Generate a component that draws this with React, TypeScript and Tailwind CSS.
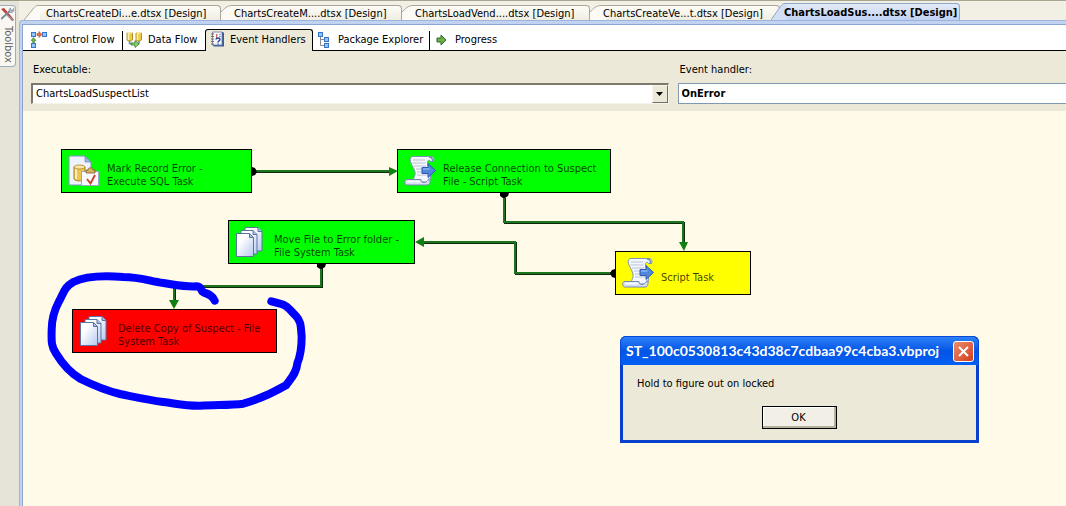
import { useState, type ReactNode } from 'react';
import clsx from 'clsx';

interface DocTab {
  title: string;
  width: string;
  first?: boolean;
}

const docTabs: DocTab[] = [
  { title: 'ChartsCreateDi...e.dtsx [Design]', width: 'w-[197px] pl-[22px]', first: true },
  { title: 'ChartsCreateM....dtsx [Design]', width: 'w-[181px] pl-[13px]' },
  { title: 'ChartsLoadVend....dtsx [Design]', width: 'w-[188px] pl-[13px]' },
  { title: 'ChartsCreateVe...t.dtsx [Design]', width: 'w-[190px] pl-[13px]' },
];

function ControlFlowIcon() {
  return (
    <svg width="17" height="17" viewBox="0 0 17 17" aria-hidden="true">
      <g fill="#8cc8fa" stroke="#3a74cc">
        <rect x="0.5" y="1.5" width="4" height="4" />
        <rect x="11.5" y="1.5" width="4" height="4" />
        <rect x="0.5" y="12.5" width="4" height="4" />
      </g>
      <path d="M6 2.500h2V0.500l3 3-3 3V4.500H6z" fill="#e86c3c" stroke="#b8401c" strokeWidth="0.600" />
      <path d="M1.500 11.500V9.500H0l2.500-3 2.500 3H3.500v2z" fill="#6cb84c" stroke="#3c7c28" strokeWidth="0.600" />
    </svg>
  );
}

function DataFlowIcon() {
  return (
    <svg width="17" height="17" viewBox="0 0 17 17" aria-hidden="true">
      <path d="M3.500 8v4.500H7M13 8v4.500H10" fill="none" stroke="#6a8fc8" strokeWidth="1.500" />
      <g fill="#f0c840" stroke="#a07c10" strokeWidth="0.800">
        <path d="M1 2v7c1 1.500 4.500 1.500 5.500 0V2z" />
        <path d="M10 2v7c1 1.500 4.500 1.500 5.500 0V2z" />
      </g>
      <path d="M2.500 3v6M11.500 3v6" stroke="#fff3b0" strokeWidth="1.500" />
      <ellipse cx="3.700" cy="2" rx="2.700" ry="1" fill="#fbe9a0" />
      <ellipse cx="12.700" cy="2" rx="2.700" ry="1" fill="#fbe9a0" />
      <path d="M5 12h4v-2.500l4 3.500-4 3.500V14H5z" fill="#8cd46c" stroke="#2b7a1c" strokeWidth="0.800" />
    </svg>
  );
}

function EventHandlersIcon() {
  return (
    <svg width="15" height="17" viewBox="0 0 15 17" aria-hidden="true">
      <path d="M3 1h10l1 1v13.500H4L2.500 14z" fill="#3a5c9c" />
      <path d="M2.500 1h9.500v13H2.500z" fill="#f4f6fb" stroke="#6a7a9c" strokeWidth="0.800" />
      <path d="M1 3h3M1 5.500h3M1 8h3M1 10.500h3M1 13h3" stroke="#7c6a50" />
      <path d="M6 4h1.500M6 6h1" stroke="#d23c28" strokeWidth="1.500" />
      <path d="M9 3.500h2M9 5.500h2" stroke="#8aa4d0" />
      <path d="M6 8.500c0-2 4-2 4 0 0 1.300-2 1.300-2 3M8 12.500v1" fill="none" stroke="#1c3c90" strokeWidth="1.300" />
    </svg>
  );
}

function PackageExplorerIcon() {
  return (
    <svg width="12" height="16" viewBox="0 0 12 16" aria-hidden="true">
      <path d="M2.500 5v8.500H7M2.500 7.500H7" fill="none" stroke="#8c8c8c" />
      <g fill="#8cc4f8" stroke="#3a74c4">
        <rect x="0.500" y="0.500" width="4" height="4" />
        <rect x="6.500" y="5.500" width="4" height="4" />
        <rect x="6.500" y="11.500" width="4" height="4" />
      </g>
    </svg>
  );
}

function ProgressIcon() {
  return (
    <svg width="11" height="12" viewBox="0 0 11 12" aria-hidden="true">
      <path d="M1 4h4V1l5 5-5 5V8H1z" fill="#6ab04c" stroke="#2f6a20" />
    </svg>
  );
}

function ToolboxIcon() {
  return (
    <svg width="14" height="16" viewBox="0 0 14 16" aria-hidden="true">
      <path d="M0 3l3-1 7 8 3 4-2 1L3 6z" fill="#c43a34" />
      <path d="M0 13l9-8" stroke="#7c8894" strokeWidth="2" />
      <path d="M12.500 2.500c1 2-0.500 4.500-3 4-1.800-0.500-2-3 0-4.500l0.500 2.500h1.500z" fill="#b8c4d0" stroke="#6c7c8c" strokeWidth="0.700" />
      <path d="M6 9l6 5" stroke="#8c98a4" strokeWidth="1.500" />
    </svg>
  );
}

function SqlTaskIcon() {
  return (
    <svg width="32" height="32" viewBox="0 0 32 32" aria-hidden="true">
      <path d="M1 1h16l6 6v23H1z" fill="#eef3fd" stroke="#8094c0" />
      <path d="M17 1v6h6z" fill="#9cb4e0" stroke="#6c84b8" strokeWidth="0.700" />
      <path d="M6 12v12c1 2.500 9 2.500 11 0V12z" fill="#ecc458" stroke="#a88020" />
      <path d="M8 13v11" stroke="#fff0b0" strokeWidth="2" />
      <ellipse cx="11.500" cy="12" rx="5.500" ry="2" fill="#fae8a8" stroke="#a88020" strokeWidth="0.800" />
      <rect x="13.500" y="16.500" width="17" height="14" fill="#fafbff" stroke="#98a8c8" />
      <path d="M18 18v-3h2c0-3 5-3 5 0h2v3z" fill="#d0b468" stroke="#806020" strokeWidth="0.800" />
      <path d="M19 24l3.500 4.500L27 20" fill="none" stroke="#cc4430" strokeWidth="2" />
    </svg>
  );
}

function ScriptTaskIcon() {
  return (
    <svg width="32" height="32" viewBox="0 0 32 32" aria-hidden="true">
      <path
        d="M8 1.500h19c3 0 3.500 3 2.500 5h-3c-0.500-2-3-1.500-3 0.500 0 5 3 9 3 14 0 3-0.500 5-1.500 6H10c-2-3 2-6 1-10C10 12 3 4.500 8 1.500z"
        fill="#f4f7fd"
        stroke="#8094b8"
      />
      <path d="M9 5h12M8.500 8h13M10 11h12M12 14h11M13 17h10M13 20h10" stroke="#b8c2d4" />
      <path d="M25 2c2.500 0 4 2 3.500 4.500" fill="none" stroke="#7088b0" strokeWidth="1.500" />
      <path d="M2 24.500h15c0 2 1 3 3 3s4-1.500 5-4c2 2 1 6.500-2 6.500H3c-2.500 0-3-4-1-5.500z" fill="#d8e2f4" stroke="#7488b0" />
      <path d="M3.500 26.500h12" stroke="#fff" strokeWidth="1.500" />
      <path d="M18 12.500h6v-4l7.500 7-7.500 7v-4h-6z" fill="#5288dc" stroke="#2c58b0" />
      <path d="M19 14h6.500" stroke="#a8c8f8" />
    </svg>
  );
}

function FileTaskIcon() {
  return (
    <svg width="32" height="32" viewBox="0 0 32 32" aria-hidden="true">
      <defs>
        <linearGradient id="sheet" x1="0" y1="0" x2="1" y2="1">
          <stop offset="0.300" stopColor="#ffffff" />
          <stop offset="1" stopColor="#b4c8f0" />
        </linearGradient>
      </defs>
      <g fill="url(#sheet)" stroke="#5c74a4">
        <path d="M10 1.500h13l4 4V25H10z" />
        <path d="M23 1.500v4h4" fill="#a8c0e8" />
        <path d="M6 4.500h12l4 4V28H6z" />
        <path d="M18 4.500v4h4" fill="#a8c0e8" />
        <path d="M1.500 7.500h13l4 4v19h-17z" />
        <path d="M14.500 7.500v4h4z" fill="#a8c0e8" />
      </g>
    </svg>
  );
}

function DocumentTab({ title, width, first }: DocTab) {
  return (
    <button type="button" className={clsx('relative flex h-[15px] shrink-0 items-center pt-0.5', width)}>
      <svg className="absolute top-0 left-0 h-[15px] w-4" viewBox="0 0 16 15" aria-hidden="true">
        {first ? (
          <>
            <path d="M0 15L9 4C11 1.500 12 0.500 14 0.500H16V15z" fill="#fbfaf4" />
            <path d="M0 15L9 4C11 1.500 12 0.500 14 0.500H16" fill="none" stroke="#a8a898" />
          </>
        ) : (
          <>
            <path d="M0 15V7C3 4 6 0.500 11 0.500H16V15z" fill="#fbfaf4" />
            <path d="M0 7C3 4 6 0.500 11 0.500H16" fill="none" stroke="#a8a898" />
          </>
        )}
      </svg>
      <span className="absolute top-0 right-0 left-4 h-[15px] rounded-tr border-t border-r border-[#a8a898] bg-gradient-to-b from-[#fdfcf8] to-[#f0ede0]" />
      <span className="relative">{title}</span>
    </button>
  );
}

interface ViewTabProps {
  icon: ReactNode;
  label: string;
  className: string;
}

function ViewTab({ icon, label, className }: ViewTabProps) {
  return (
    <button type="button" className={clsx('flex shrink-0 items-center border-black pb-0.5', className)}>
      {icon}
      <span>{label}</span>
    </button>
  );
}

interface TaskProps {
  icon: ReactNode;
  children: ReactNode;
  className: string;
}

function Task({ icon, children, className }: TaskProps) {
  return (
    <div className={clsx('absolute flex h-11 items-center gap-[7px] border border-black pl-1.5', className)}>
      {icon}
      <p className="pt-2 leading-[13px] text-black/75">{children}</p>
    </div>
  );
}

function Connector({ d }: { d: string }) {
  return (
    <g fill="none">
      <path d={d} stroke="#0c2c0c" strokeWidth="2" transform="translate(1 1)" />
      <path d={d} stroke="#1c741c" strokeWidth="2" />
    </g>
  );
}

function Connectors() {
  return (
    <svg className="absolute inset-0 h-full w-full" aria-hidden="true">
      <Connector d="M229 60H368" />
      <Connector d="M481 86V111H660V132" />
      <Connector d="M590 162H492V131H398" />
      <Connector d="M298 156V175H151V192" />
      <g fill="#108010">
        <path d="M375 60l-9-4v9z" />
        <path d="M661 140l-5-9h9z" />
        <path d="M392 131l9-5v10z" />
        <path d="M151 198l-5-9h10z" />
      </g>
      <g fill="#000">
        <path d="M229 56l3 1 2 4-2 3-3 1z" />
        <path d="M477 82h9l-1 3-3 2h-2l-3-2z" />
        <path d="M592 158l-3 1-2 3 2 4 3 1z" />
        <path d="M294 153h9l-1 3-3 2h-2l-3-2z" />
      </g>
    </svg>
  );
}

// Freehand pen mark round the failed task
function PenMark() {
  return (
    <svg className="pointer-events-none absolute top-[149px] left-[17px] h-[150px] w-[270px]" viewBox="0 0 810 450" aria-hidden="true">
      <path
        d="M524 122C518 106 504 102 490 97C480 90 486 80 470 79C430 81 400 73 370 69C330 64 300 51 250 51C200 47 140 46 100 66C72 82 72 98 56 126C38 160 35 185 35 210C34 245 34 260 48 280C65 308 90 338 122 357C160 376 200 392 240 402C285 411 325 420 370 426C410 431 440 438 480 437C530 434 570 436 610 431C650 420 700 398 738 376C752 356 770 340 772 310C784 280 785 260 785 230C782 200 784 185 768 168C750 150 740 134 720 131L694 124"
        fill="none"
        stroke="#0000ff"
        strokeWidth="24"
        strokeLinecap="round"
        strokeLinejoin="round"
      />
    </svg>
  );
}

function MessageBox({ onClose }: { onClose: () => void }) {
  return (
    <div
      role="dialog"
      aria-labelledby="msg-title"
      className="absolute top-[225px] left-[597px] w-[359px] rounded-t-md bg-[#0842cc] px-[3px] pb-[3px]"
    >
      <div className="-mx-[3px] flex h-[29px] items-center justify-between rounded-t-md border-x border-t border-[#0a48d8] bg-gradient-to-b from-[#2c80f8] via-[#0355e4] to-[#0460f4] pr-1 pl-[5px]">
        <h2 id="msg-title" className="font-['Lato',sans-serif] text-[14px] font-bold whitespace-nowrap text-white">
          ST_100c0530813c43d38c7cdbaa99c4cba3.vbproj
        </h2>
        <button
          type="button"
          aria-label="Close"
          onClick={onClose}
          className="flex h-[21px] w-[21px] shrink-0 items-center justify-center rounded-[3px] border border-white bg-gradient-to-br from-[#ec8a6c] to-[#d03c14]"
        >
          <svg width="13" height="13" viewBox="0 0 13 13" aria-hidden="true">
            <path d="M2 2l9 9M11 2l-9 9" stroke="#fff" strokeWidth="2" />
          </svg>
        </button>
      </div>
      <div className="flex flex-col bg-[#ece9d8] px-3.5 pt-3 pb-[11px]">
        <p className="leading-[14px]">Hold to figure out on locked</p>
        <button
          type="button"
          onClick={onClose}
          className="mt-[15px] h-[23px] w-[75px] self-center border border-black bg-[#f1efe6] pr-0.5 shadow-[inset_-2px_-2px_0_#b4b09c,inset_1px_1px_0_#ffffff]"
        >
          OK
        </button>
      </div>
    </div>
  );
}

export default function App() {
  const [messageOpen, setMessageOpen] = useState(true);

  return (
    <div className="flex min-h-screen overflow-hidden bg-[#e6e4d8] font-['DejaVu_Sans_Condensed','DejaVu_Sans',sans-serif] text-[11px] leading-[14px] text-black">
      <aside className="w-[19px] shrink-0 border-t border-[#9c9a84] pt-1">
        <button
          type="button"
          className="flex h-[62px] w-4 flex-col items-center gap-1 rounded-r border border-l-0 border-[#9cacb8] bg-[#f8f7f2] text-[#606060]"
        >
          <ToolboxIcon />
          <span className="[writing-mode:vertical-rl]">Toolbox</span>
        </button>
      </aside>

      <div className="flex min-w-0 flex-1 flex-col">
        <div className="flex h-5 items-end overflow-hidden border-t border-[#a8a690] bg-[#f2efe4] pl-[5px]">
          {docTabs.map((t) => (
            <DocumentTab key={t.title} {...t} />
          ))}
          <button type="button" className="relative -ml-[9px] flex h-[17px] w-[189px] shrink-0 items-center pt-0.5 pl-[13px] font-bold">
            <svg className="absolute top-0 left-0 h-[17px] w-4" viewBox="0 0 16 17" aria-hidden="true">
              <path d="M0 17L9 4C11 1.500 12 0.500 14 0.500H16V17z" fill="#d2def5" />
              <path d="M0 17L9 4C11 1.500 12 0.500 14 0.500H16" fill="none" stroke="#8ca6cc" />
            </svg>
            <span className="absolute top-0 right-0 left-4 h-[17px] rounded-tr border-t border-r border-[#8ca6cc] bg-gradient-to-b from-[#e4ebf8] to-[#c0d2f2]" />
            <span className="relative whitespace-nowrap">ChartsLoadSus....dtsx [Design]</span>
          </button>
        </div>

        <main className="flex flex-1 flex-col rounded-tl border-t border-l border-[#9cb4dc] bg-[#c2d3f2] pt-[3px] pl-0.5">
          <div className="flex flex-1 flex-col border-t border-l border-[#8ca6d4] bg-[#ece9d8]">
            <nav className="flex h-[26px] items-end bg-white">
              <ViewTab icon={<ControlFlowIcon />} label="Control Flow" className="h-5 w-[100px] gap-[5px] border-r border-b pl-2" />
              <ViewTab icon={<DataFlowIcon />} label="Data Flow" className="h-5 w-[82px] gap-[5px] border-b pl-[3px]" />
              <ViewTab
                icon={<EventHandlersIcon />}
                label="Event Handlers"
                className="h-[22px] w-[108px] gap-[5px] rounded-t-[3px] border-x border-t bg-[#ece9d8] pl-1"
              />
              <ViewTab icon={<PackageExplorerIcon />} label="Package Explorer" className="h-5 w-[117px] gap-2 border-r border-b pl-[5px]" />
              <ViewTab icon={<ProgressIcon />} label="Progress" className="h-5 w-20 gap-2 border-b pl-1.5" />
              <span className="h-5 flex-1 border-b border-black" />
            </nav>

            <form className="grid grid-cols-[637fr_388fr] gap-x-[9px] pt-3 pb-[7px] pl-2">
              <label htmlFor="executable" className="pb-1.5 pl-0.5">
                Executable:
              </label>
              <label htmlFor="handler" className="pb-1.5 pl-0.5">
                Event handler:
              </label>
              <div className="relative">
                <select
                  id="executable"
                  className="h-[21px] w-full appearance-none border-t-2 border-r border-b border-l-2 border-[#f6f4ea] border-t-[#7c796c] border-l-[#7c796c] bg-white pl-[3px]"
                >
                  <option>ChartsLoadSuspectList</option>
                </select>
                <span className="pointer-events-none absolute top-0.5 right-px flex h-[18px] w-4 items-center justify-center border border-[#f8f6ee] border-r-[#716f64] border-b-[#716f64] bg-[#ece9d8]">
                  <svg width="7" height="4" viewBox="0 0 7 4" aria-hidden="true">
                    <path d="M0 0h7L3.500 4z" />
                  </svg>
                </span>
              </div>
              <select
                id="handler"
                className="h-[21px] w-full appearance-none border border-r-0 border-[#8098b0] bg-white pl-[3px] font-bold"
              >
                <option>OnError</option>
              </select>
            </form>

            <section className="relative flex-1 overflow-hidden bg-[#fffbe8]">
              <Connectors />
              <Task icon={<SqlTaskIcon />} className="top-[38px] left-[38px] w-[191px] bg-[#00ff00]">
                Mark Record Error -<br />
                Execute SQL Task
              </Task>
              <Task icon={<ScriptTaskIcon />} className="top-[38px] left-[374px] w-[214px] bg-[#00ff00]">
                Release Connection to Suspect
                <br />
                File - Script Task
              </Task>
              <Task icon={<FileTaskIcon />} className="top-[109px] left-[205px] w-[187px] bg-[#00ff00]">
                Move File to Error folder -<br />
                File System Task
              </Task>
              <Task icon={<ScriptTaskIcon />} className="top-[140px] left-[592px] w-[136px] bg-[#ffff00]">
                Script Task
              </Task>
              <Task icon={<FileTaskIcon />} className="top-[198px] left-[49px] w-[205px] bg-[#ff0000]">
                Delete Copy of Suspect - File
                <br />
                System Task
              </Task>
              <PenMark />
              {messageOpen && <MessageBox onClose={() => setMessageOpen(false)} />}
            </section>
          </div>
        </main>
      </div>
    </div>
  );
}
